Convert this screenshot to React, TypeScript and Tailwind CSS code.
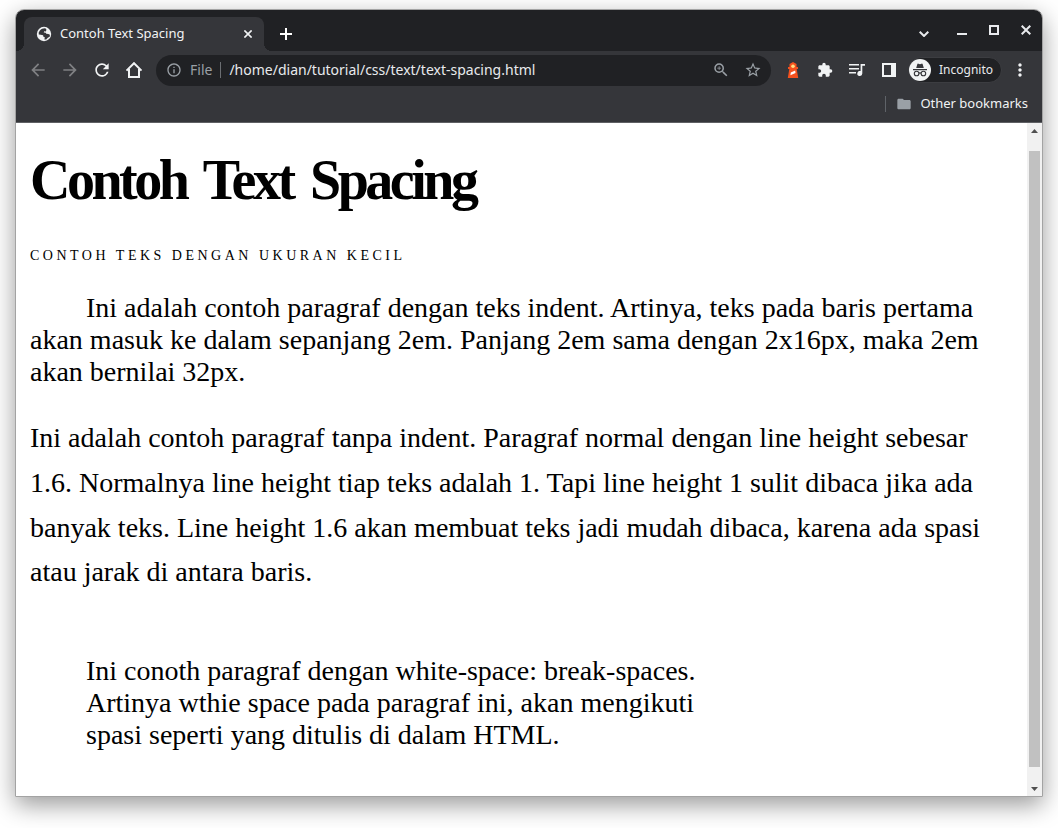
import { useState } from "react";
import type { ReactNode } from "react";
import {
  MdArrowBack,
  MdArrowForward,
  MdRefresh,
  MdInfoOutline,
  MdZoomIn,
  MdStarBorder,
  MdExtension,
  MdFolder,
  MdMoreVert,
} from "react-icons/md";

type IconButtonProps = {
  label: string;
  children: ReactNode;
  muted?: boolean;
};

function IconButton({ label, children, muted = false }: IconButtonProps) {
  return (
    <button
      type="button"
      aria-label={label}
      className={
        muted
          ? "flex size-8 shrink-0 items-center justify-center text-[#7f8083]"
          : "flex size-8 shrink-0 items-center justify-center text-[#f1f3f4]"
      }
    >
      {children}
    </button>
  );
}

function GlobeIcon() {
  return (
    <svg viewBox="0 0 16 16" className="size-4 shrink-0" aria-hidden="true">
      <circle cx="8" cy="8" r="7.2" fill="#f1f3f4" />
      <path
        fill="#35363a"
        d="M9.6 2.4C7.5 2.2 5.2 2.9 3.9 4.4L2.7 6.6l.1 2 2 .2 2.3.4.3 1.5 1.4.6-.4 2.3 1.8-.1 1.6-1.8 1.9-.9.2-2-1.6-.9-2-.2-.6-1-1.9-.2.3-1.2 1.7.1.7-1.6z"
      />
    </svg>
  );
}

function HomeIcon() {
  return (
    <svg viewBox="0 0 18 18" className="size-[18px]" fill="none" stroke="currentColor" strokeWidth="2" aria-hidden="true">
      <path d="M1.5 9.6 9 2.2l7.5 7.4M4 8v8h10V8" />
    </svg>
  );
}

function LighthouseIcon() {
  return (
    <svg viewBox="0 0 12 16" className="h-4 w-3" aria-hidden="true">
      <path fill="#f4511e" d="M6 0 9.5 2v3H11v2H9.7L11.2 16H.8L2.3 7H1V5h1.5V2z" />
      <circle cx="6" cy="4.2" r="1.8" fill="#ffe082" />
      <path fill="#fff" d="M3.8 10.4 8.2 8.6 8.5 11 3.4 13.2z" />
    </svg>
  );
}

function MediaIcon() {
  return (
    <svg viewBox="0 0 18 16" className="h-4 w-[18px]" fill="currentColor" aria-hidden="true">
      <path d="M1 2h10v1.600H1zM1 6h10v1.600H1zM1 10h7v1.600H1zM12.600 2H17v1.700h-2.700v7.800a2.500 2.500 0 1 1-1.700-2.400z" />
    </svg>
  );
}

function SidePanelIcon() {
  return (
    <svg viewBox="0 0 14 14" className="size-3.5" fill="currentColor" aria-hidden="true">
      <path fillRule="evenodd" d="M0 0h14v14H0zM2 2v10h7V2z" />
    </svg>
  );
}

function IncognitoIcon() {
  return (
    <svg viewBox="0 0 22 22" className="size-[22px]" aria-hidden="true">
      <circle cx="11" cy="11" r="11" fill="#f1f3f4" />
      <path fill="#35363a" d="M7.200 9 8.300 5.200Q8.600 4.400 9.400 4.700L11 5.200l1.600-.5q.8-.3 1.100.5L14.800 9zM4 10h14v1.200H4z" />
      <g fill="none" stroke="#35363a" strokeWidth="1.100">
        <circle cx="7.600" cy="14.500" r="2.300" />
        <circle cx="14.400" cy="14.500" r="2.300" />
        <path d="M9.900 14.300q1.100-.8 2.200 0" />
      </g>
    </svg>
  );
}

function TabStrip() {
  return (
    <div className="flex items-end bg-[#202124] pl-2 pt-[7px]">
      <div className="relative flex h-[34px] w-60 items-center rounded-t-lg bg-[#35363a] pl-3 pr-2 text-[#f1f3f4] before:absolute before:bottom-0 before:-left-2 before:size-2 before:bg-[radial-gradient(circle_at_0_0,#202124_8px,#35363a_8px)] after:absolute after:bottom-0 after:-right-2 after:size-2 after:bg-[radial-gradient(circle_at_100%_0,#202124_8px,#35363a_8px)]">
        <GlobeIcon />
        <span className="ml-2 flex-1 text-[13px]">Contoh Text Spacing</span>
        <button type="button" aria-label="Close tab" className="flex size-4 items-center justify-center">
          <svg viewBox="0 0 8 8" className="size-2" stroke="currentColor" strokeWidth="1.600" aria-hidden="true">
            <path d="m.4.4 7.200 7.200M7.600.4.4 7.600" />
          </svg>
        </button>
      </div>
      <button type="button" aria-label="New tab" className="ml-2 flex h-[34px] w-7 items-center justify-center text-white">
        <svg viewBox="0 0 12 12" className="size-3" stroke="currentColor" strokeWidth="2" aria-hidden="true">
          <path d="M6 0v12M0 6h12" />
        </svg>
      </button>
      <div className="ml-auto flex h-[34px] text-[#e8eaed]">
        <button type="button" aria-label="Search tabs" className="flex w-9 items-center justify-center">
          <svg viewBox="0 0 10 6" className="h-1.5 w-2.5" fill="none" stroke="currentColor" strokeWidth="2" aria-hidden="true">
            <path d="m.7.700 4.300 4.300L9.300.700" />
          </svg>
        </button>
        <button type="button" aria-label="Minimize" className="flex w-10 items-center justify-center">
          <svg viewBox="0 0 10 2" className="h-0.5 w-2.5" fill="currentColor" aria-hidden="true">
            <path d="M0 0h10v2H0z" />
          </svg>
        </button>
        <button type="button" aria-label="Maximize" className="flex w-6 justify-center pt-2">
          <svg viewBox="0 0 10 10" className="size-2.5" fill="currentColor" aria-hidden="true">
            <path fillRule="evenodd" d="M0 0h10v10H0zM2 2v6h6V2z" />
          </svg>
        </button>
        <button type="button" aria-label="Close window" className="flex w-9 justify-center pl-1 pt-2">
          <svg viewBox="0 0 10 10" className="size-2.5" stroke="currentColor" strokeWidth="2" aria-hidden="true">
            <path d="m.7.700 8.600 8.600M9.300.700.7 9.300" />
          </svg>
        </button>
      </div>
    </div>
  );
}

function Toolbar() {
  const [url, setUrl] = useState("/home/dian/tutorial/css/text/text-spacing.html");
  return (
    <div className="flex h-[38px] items-center bg-[#35363a] px-1.5">
      <IconButton label="Back" muted>
        <MdArrowBack className="size-5" aria-hidden="true" />
      </IconButton>
      <IconButton label="Forward" muted>
        <MdArrowForward className="size-5" aria-hidden="true" />
      </IconButton>
      <IconButton label="Reload">
        <MdRefresh className="size-5" aria-hidden="true" />
      </IconButton>
      <IconButton label="Home">
        <HomeIcon />
      </IconButton>
      <div className="mx-1.5 flex h-[31px] min-w-0 flex-1 items-center rounded-full bg-[#202124] pl-2.5 pr-0.5 text-sm text-[#9aa0a6]">
        <MdInfoOutline className="size-4 shrink-0" aria-hidden="true" />
        <label htmlFor="address" className="ml-2 border-r border-[#6b6e72] pr-2 leading-4">
          File
        </label>
        <input
          id="address"
          type="text"
          value={url}
          onChange={(event) => setUrl(event.target.value)}
          className="ml-2 min-w-0 flex-1 bg-transparent text-[#e8eaed] outline-none"
        />
        <button type="button" aria-label="Zoom" className="flex size-8 items-center justify-center">
          <MdZoomIn className="size-[18px]" aria-hidden="true" />
        </button>
        <button type="button" aria-label="Bookmark this tab" className="flex size-8 items-center justify-center">
          <MdStarBorder className="size-[18px]" aria-hidden="true" />
        </button>
      </div>
      <IconButton label="Lighthouse">
        <LighthouseIcon />
      </IconButton>
      <IconButton label="Extensions">
        <MdExtension className="size-4" aria-hidden="true" />
      </IconButton>
      <IconButton label="Media controls">
        <MediaIcon />
      </IconButton>
      <IconButton label="Side panel">
        <SidePanelIcon />
      </IconButton>
      <button
        type="button"
        className="ml-[3px] mr-0.5 flex h-[26px] shrink-0 items-center gap-2 rounded-full border border-[#3c3d41] bg-[#202124] pr-2 text-xs text-[#e8eaed]"
      >
        <IncognitoIcon />
        Incognito
      </button>
      <IconButton label="Menu">
        <MdMoreVert className="size-5" aria-hidden="true" />
      </IconButton>
    </div>
  );
}

function BookmarksBar() {
  return (
    <div className="flex h-[34px] items-center justify-end border-b border-[#5f6064] bg-[#35363a] pb-[3px] pr-3.5">
      <button type="button" className="flex h-4 items-center gap-2 border-l border-[#5f6368] pl-2.5 text-[13px] text-[#f1f3f4]">
        <MdFolder className="size-4 text-[#9aa0a6]" aria-hidden="true" />
        Other bookmarks
      </button>
    </div>
  );
}

function Scrollbar() {
  return (
    <div className="flex w-[15px] shrink-0 flex-col items-center bg-[#f1f1f1] text-[#505050]">
      <button type="button" aria-label="Scroll up" className="flex h-[15px] w-full items-center justify-center">
        <svg viewBox="0 0 7 4" className="h-1 w-[7px]" fill="currentColor" aria-hidden="true">
          <path d="M0 4 3.500 0 7 4z" />
        </svg>
      </button>
      <div className="mb-3.5 mt-[13px] w-[11px] flex-1 bg-[#c1c1c1]" />
      <button type="button" aria-label="Scroll down" className="flex h-[15px] w-full items-center justify-center">
        <svg viewBox="0 0 7 4" className="h-1 w-[7px]" fill="currentColor" aria-hidden="true">
          <path d="M0 0h7L3.500 4z" />
        </svg>
      </button>
    </div>
  );
}

function Page() {
  return (
    <main className="min-w-0 flex-1 px-3.5 font-['Liberation_Serif',serif] text-[28px] leading-8 text-black">
      <h1 className="mt-[25px] text-[56px] font-bold leading-[64px] tracking-[-0.0625em] [word-spacing:0.125em]">
        Contoh Text Spacing
      </h1>
      <p className="mt-9 text-sm leading-4 tracking-[0.25em]">CONTOH TEKS DENGAN UKURAN KECIL</p>
      <p className="mt-7 indent-14">
        Ini adalah contoh paragraf dengan teks indent. Artinya, teks pada baris pertama akan masuk ke dalam sepanjang
        2em. Panjang 2em sama dengan 2x16px, maka 2em akan bernilai 32px.
      </p>
      <p className="mt-7 leading-[1.6]">
        Ini adalah contoh paragraf tanpa indent. Paragraf normal dengan line height sebesar 1.6. Normalnya line height
        tiap teks adalah 1. Tapi line height 1 sulit dibaca jika ada banyak teks. Line height 1.6 akan membuat teks jadi
        mudah dibaca, karena ada spasi atau jarak di antara baris.
      </p>
      <p className="mt-[60px] pl-14">
        Ini conoth paragraf dengan white-space: break-spaces.
        <br />
        Artinya wthie space pada paragraf ini, akan mengikuti
        <br />
        spasi seperti yang ditulis di dalam HTML.
      </p>
    </main>
  );
}

export default function App() {
  return (
    <div className="flex min-h-screen bg-white px-[15px] pb-[31px] pt-[9px] font-['Noto_Sans',sans-serif]">
      <div className="flex min-w-0 flex-1 flex-col overflow-hidden rounded-t-[9px] border border-[#a3a3a3] shadow-[0_8px_24px_rgba(0,0,0,0.4)]">
        <TabStrip />
        <Toolbar />
        <BookmarksBar />
        <div className="flex flex-1 bg-white">
          <Page />
          <Scrollbar />
        </div>
      </div>
    </div>
  );
}
